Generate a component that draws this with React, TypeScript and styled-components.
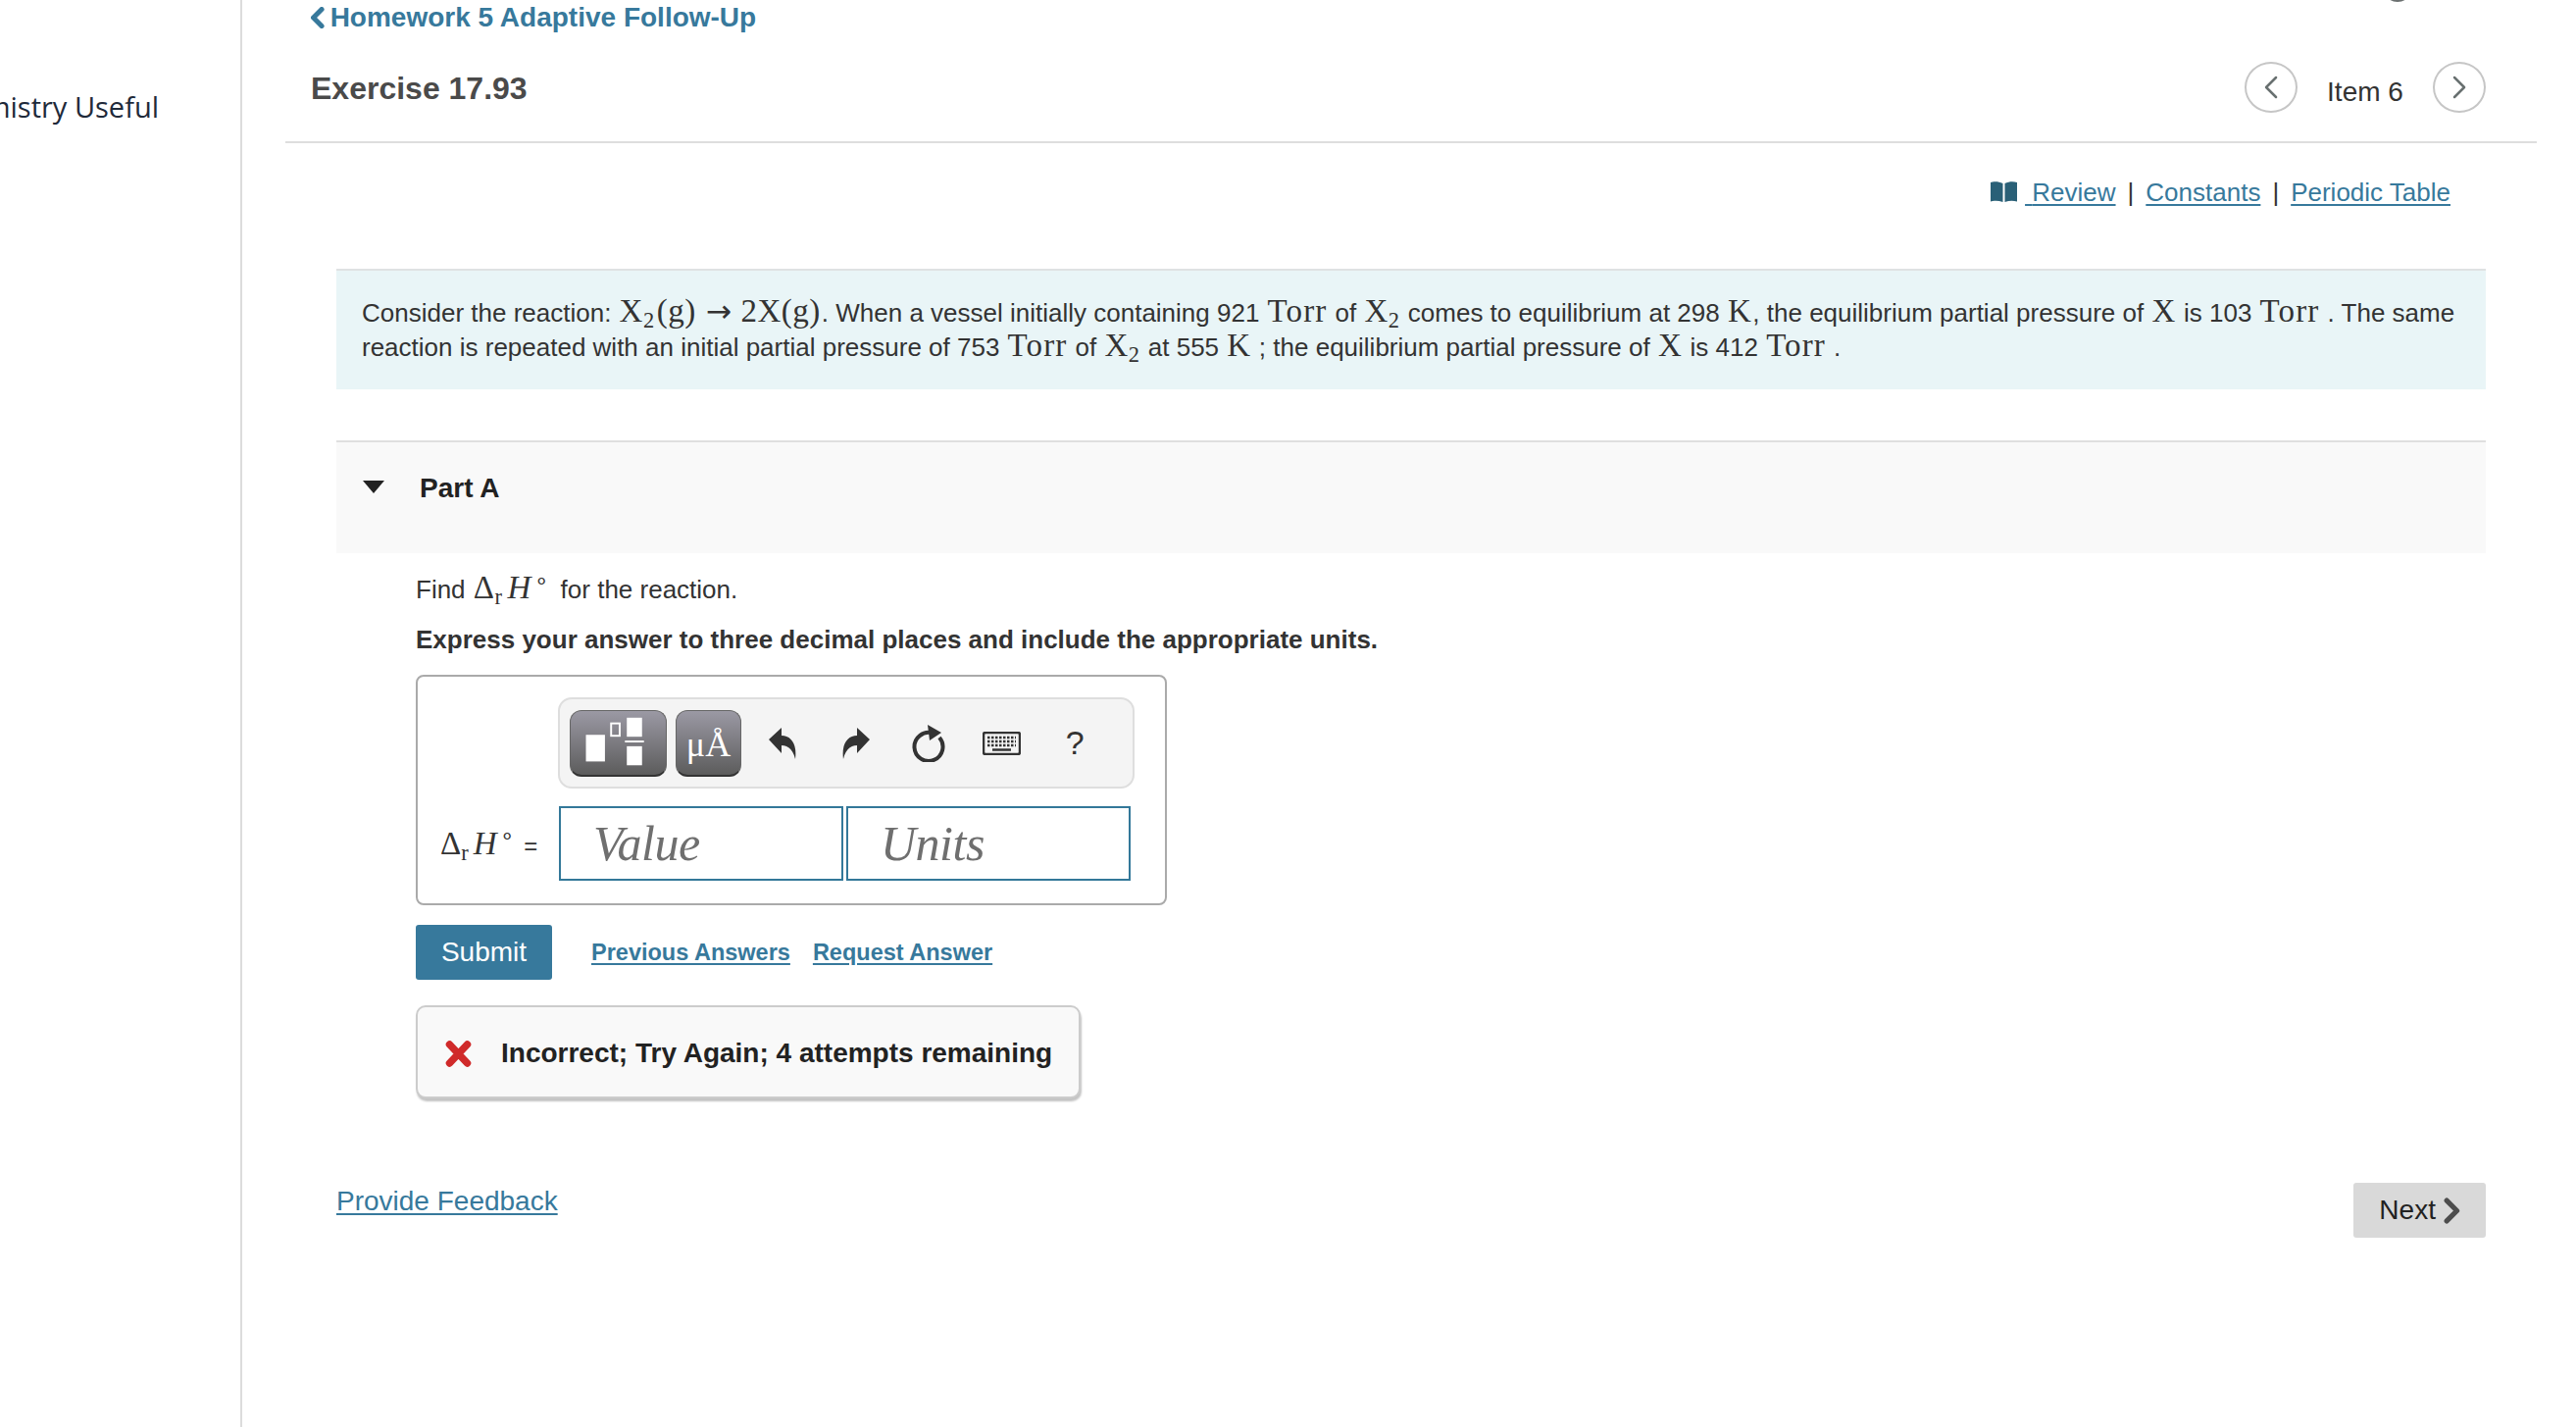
import { FC, ReactNode } from "react"
import styled, { createGlobalStyle } from "styled-components"

const GlobalStyle = createGlobalStyle`
  html, body {
    margin: 0;
    padding: 0;
    background: #fff;
  }
  body {
    font-family: "Liberation Sans", Arial, sans-serif;
    color: #333;
  }
`

const Page = styled.div`
  position: relative;
  display: flex;
  width: 2627px;
  height: 1455px;
  overflow: hidden;
`

const Sidebar = styled.aside`
  flex: none;
  box-sizing: border-box;
  width: 247px;
  height: 100%;
  border-right: 2px solid #dcdcdc;
  overflow: hidden;
  display: flex;
  justify-content: flex-end;
  padding: 89px 83px 0 0;
  font-family: "Open Sans", sans-serif;
  font-size: 29px;
  line-height: 40px;
  color: #1f2a3a;
  white-space: nowrap;
`

const TopCircle = styled.div`
  position: absolute;
  left: 2430px;
  top: -28px;
  width: 30px;
  height: 30px;
  border-radius: 50%;
  background: #6b7070;
`

const Main = styled.main`
  flex: 1;
  padding-left: 44px;
  padding-right: 40px;
`

const Header = styled.header`
  box-sizing: border-box;
  height: 146px;
  border-bottom: 2px solid #dedede;
  padding-left: 26px;
`

const BackLink = styled.a`
  display: flex;
  align-items: center;
  gap: 6px;
  height: 36px;
  font-size: 28px;
  font-weight: 700;
  color: #37799c;
`

const TitleRow = styled.div`
  display: flex;
  align-items: center;
  justify-content: space-between;
  margin-top: 27px;
  padding-right: 52px;
`

const Title = styled.h1`
  margin: 2px 0 0;
  font-size: 32px;
  font-weight: 700;
  color: #4a4a4a;
`

const Pager = styled.div`
  display: flex;
  align-items: center;
  font-size: 28px;
  color: #333;
`

const PagerLabel = styled.span`
  width: 138px;
  padding-top: 10px;
  text-align: center;
`

const RoundButton = styled.button`
  box-sizing: border-box;
  display: flex;
  align-items: center;
  justify-content: center;
  width: 54px;
  height: 52px;
  padding: 0;
  border: 2px solid #c6c6c6;
  border-radius: 50%;
  background: #fff;
`

const Content = styled.div`
  padding: 0 52px;
`

const ResourceRow = styled.div`
  display: flex;
  align-items: center;
  justify-content: flex-end;
  height: 36px;
  margin-top: 32px;
  padding-right: 36px;
  font-size: 26px;
`

const TextLink = styled.a`
  color: #37799c;
  text-decoration: underline;
  text-underline-offset: 3px;
  text-decoration-thickness: 2px;
`

const Pipe = styled.span`
  margin: 0 12px;
  color: #333;
`

const Problem = styled.section`
  box-sizing: border-box;
  height: 123px;
  margin-top: 60px;
  padding: 26px 0 0 26px;
  border-top: 2px solid #dfe2e3;
  background: #e9f5f7;
  font-size: 26px;
  line-height: 35px;
  color: #333;
  white-space: nowrap;
`

const Math = styled.span`
  margin: 0 1px;
  font-family: "Liberation Serif", serif;
  font-size: 1.27em;
  letter-spacing: 0.5px;
  line-height: 0;
`

const Unit = styled(Math)`
  letter-spacing: 1.1px;
`

const Arrow = styled.span`
  margin: 0 9px 0 10px;
  font-family: "DejaVu Sans", sans-serif;
  font-size: 0.95em;
  line-height: 0;
`

const Sub = styled.sub`
  font-size: 0.68em;
  line-height: 0;
  vertical-align: -0.25em;
`

const Italic = styled.i`
  margin-left: 5px;
  font-family: "Liberation Serif", serif;
`

const Sup = styled.sup`
  margin: 0 4px 0 3px;
  font-size: 0.7em;
  line-height: 0;
  vertical-align: 0.45em;
`

const PartHeader = styled.div`
  box-sizing: border-box;
  display: flex;
  align-items: flex-start;
  height: 115px;
  margin-top: 52px;
  padding: 28px 0 0 27px;
  border-top: 2px solid #dfdfdf;
  background: #f9f9f9;
`

const Caret = styled.span`
  width: 0;
  height: 0;
  margin: 11px 36px 0 0;
  border-left: 11px solid transparent;
  border-right: 11px solid transparent;
  border-top: 13px solid #222;
`

const PartTitle = styled.h2`
  margin: 0;
  font-size: 28px;
  line-height: 38px;
  font-weight: 700;
  color: #222;
`

const PartBody = styled.div`
  padding-left: 81px;
`

const Prompt = styled.p`
  margin: 18px 0 0;
  font-size: 26px;
  line-height: 38px;
`

const Instruction = styled.p`
  margin: 14px 0 0;
  font-size: 26px;
  line-height: 36px;
  font-weight: 700;
`

const AnswerBox = styled.div`
  box-sizing: border-box;
  width: 766px;
  height: 235px;
  margin-top: 18px;
  padding: 21px 0 0 24px;
  border: 2px solid #aaa;
  border-radius: 8px;
`

const Toolbar = styled.div`
  box-sizing: border-box;
  display: flex;
  align-items: center;
  width: 588px;
  height: 93px;
  margin-left: 119px;
  padding-left: 10px;
  border: 2px solid #dedede;
  border-radius: 14px;
  background: #f4f4f4;
`

const ToolButton = styled.button<{ $width: number }>`
  box-sizing: border-box;
  display: flex;
  align-items: center;
  justify-content: center;
  width: ${({ $width }) => $width}px;
  height: 68px;
  margin-right: 9px;
  padding: 3px 0 0;
  border: 1px solid #666;
  border-bottom: 2px solid #333;
  border-radius: 12px;
  background: linear-gradient(#9b99a4, #5c5c5c);
  color: #fff;
  font-family: "Liberation Serif", serif;
  font-size: 36px;
`

const IconSlot = styled.div`
  display: flex;
  align-items: center;
  justify-content: center;
  width: 74.5px;
  font-size: 34px;
  color: #333;
  ${ToolButton} + & {
    margin-left: -4px;
  }
`

const AnswerRow = styled.div`
  display: flex;
  align-items: center;
  margin-top: 18px;
`

const AnswerLabel = styled.div`
  width: 121px;
  margin-left: -1px;
  font-size: 24px;
  color: #333;
  white-space: nowrap;
`

const LabelMath = styled.span`
  font-family: "Liberation Serif", serif;
  font-size: 33px;
`

const Field = styled.div`
  box-sizing: border-box;
  width: 290px;
  height: 76px;
  margin-right: 3px;
  padding-left: 33px;
  border: 2px solid #337899;
  background: #fff;
  font-family: "Liberation Serif", serif;
  font-style: italic;
  font-size: 50px;
  letter-spacing: -0.5px;
  line-height: 72px;
  color: #6f6f6f;
`

const ActionRow = styled.div`
  display: flex;
  align-items: center;
  margin-top: 20px;
`

const SubmitButton = styled.button`
  width: 139px;
  height: 56px;
  padding: 0;
  border: 0;
  border-radius: 3px;
  background: #37799c;
  color: #fff;
  font-family: "Liberation Sans", sans-serif;
  font-size: 28px;
`

const ActionLink = styled.a`
  margin-left: 40px;
  font-size: 23.5px;
  font-weight: 700;
  color: #37799c;
  text-decoration: underline;
  text-underline-offset: 3px;
  text-decoration-thickness: 2px;
  & + & {
    margin-left: 23px;
  }
`

const Feedback = styled.div`
  box-sizing: border-box;
  display: flex;
  align-items: center;
  gap: 30px;
  width: 678px;
  height: 95px;
  margin-top: 26px;
  padding: 3px 0 0 28px;
  border: 2px solid #ccc;
  border-radius: 10px;
  background: #f9f9f9;
  box-shadow: 1px 3px 2px #c4c4c4;
  font-size: 28px;
  font-weight: 700;
  color: #222;
`

const Footer = styled.div`
  display: flex;
  align-items: flex-start;
  justify-content: space-between;
  margin-top: 86px;
`

const FooterLink = styled(TextLink)`
  margin-top: 3px;
  font-size: 28px;
`

const NextButton = styled.button`
  display: flex;
  align-items: center;
  justify-content: center;
  gap: 8px;
  width: 135px;
  height: 56px;
  padding: 0;
  border: 0;
  border-radius: 3px;
  background: #d9d9d9;
  color: #222;
  font-family: "Liberation Sans", sans-serif;
  font-size: 28px;
`

const Chevron: FC<{ left?: boolean; size: number; color: string; stroke: number }> = ({ left, size, color, stroke }) => (
  <svg width={size * 0.62} height={size} viewBox="0 0 16 26" fill="none">
    <path
      d={left ? "M13 3 3 13l10 10" : "M3 3l10 10L3 23"}
      stroke={color}
      strokeWidth={stroke}
      strokeLinecap="round"
      strokeLinejoin="round"
    />
  </svg>
)

const BookIcon: FC = () => (
  <svg width="27" height="22" viewBox="0 0 27 22" style={{ marginRight: 8 }}>
    <path d="M0 1c4-1 8-1 12.500 1v19C8 19.500 4 19.500 0 20.500z" fill="#2a6077" />
    <path d="M27 1c-4-1-8-1-12.500 1v19c4.500-1.500 8.500-1.500 12.500-.5z" fill="#2a6077" />
  </svg>
)

const TemplateIcon: FC = () => (
  <svg width="100" height="68" viewBox="0 0 100 68" fill="#fff" style={{ marginTop: -3 }}>
    <rect x="16" y="26" width="20" height="28" />
    <rect x="42.500" y="14" width="9" height="13" fill="none" stroke="#fff" strokeWidth="2" />
    <rect x="59" y="8" width="16" height="20" />
    <rect x="57" y="32" width="20" height="2" />
    <rect x="59" y="38" width="16" height="20" />
  </svg>
)

const UndoIcon: FC<{ flip?: boolean }> = ({ flip }) => (
  <svg width="28" height="32" viewBox="0 0 28 32" style={flip ? { transform: "scaleX(-1)" } : undefined}>
    <path d="M0 12 13 0v8c10 0 16 9 14 24-2-9-7-14-14-14v8z" fill="#333" />
  </svg>
)

const RefreshIcon: FC = () => (
  <svg width="36" height="38" viewBox="0 0 36 38" fill="none">
    <path d="M22 8.500A14.500 14.500 0 1 0 29 13" stroke="#333" strokeWidth="4" />
    <path d="M17 0l14 8-12 8z" fill="#333" />
  </svg>
)

const KeyboardIcon: FC = () => (
  <svg width="39" height="24" viewBox="0 0 39 24">
    <rect x="1" y="1" width="37" height="22" rx="2" fill="#f4f4f4" stroke="#333" strokeWidth="2.500" />
    <path d="M5 6h29M5 10h29M5 14h29" stroke="#333" strokeWidth="2.500" strokeDasharray="2.500 1.500" />
    <path d="M10 18.500h19" stroke="#333" strokeWidth="2.500" />
  </svg>
)

const CrossIcon: FC = () => (
  <svg width="27" height="27" viewBox="0 0 27 27">
    <path d="M4.500 4l18 19M22.500 4l-18 19" stroke="#d02a2a" strokeWidth="7.500" strokeLinecap="round" />
  </svg>
)

const DeltaH: FC = () => (
  <>
    Δ<Sub>r</Sub>
    <Italic>H</Italic>
    <Sup>∘</Sup>
  </>
)

const X2: FC = () => (
  <Math>
    X<Sub>2</Sub>
  </Math>
)

const M: FC<{ children: ReactNode }> = ({ children }) => <Math>{children}</Math>

const App: FC = () => {
  return (
    <Page>
      <GlobalStyle />
      <Sidebar>Chemistry Useful</Sidebar>
      <TopCircle />
      <Main>
        <Header>
          <BackLink>
            <Chevron left size={22} color="#37799c" stroke={6} />
            Homework 5 Adaptive Follow-Up
          </BackLink>
          <TitleRow>
            <Title>Exercise 17.93</Title>
            <Pager>
              <RoundButton>
                <Chevron left size={26} color="#687070" stroke={2.500} />
              </RoundButton>
              <PagerLabel>Item 6</PagerLabel>
              <RoundButton>
                <Chevron size={26} color="#687070" stroke={2.500} />
              </RoundButton>
            </Pager>
          </TitleRow>
        </Header>
        <Content>
          <ResourceRow>
            <BookIcon />
            <TextLink>{"\u00a0"}Review</TextLink>
            <Pipe>|</Pipe>
            <TextLink>Constants</TextLink>
            <Pipe>|</Pipe>
            <TextLink>Periodic Table</TextLink>
          </ResourceRow>
          <Problem>
            Consider the reaction: <X2 />
            <M>
              (g)<Arrow>→</Arrow>2X(g)
            </M>
            . When a vessel initially containing 921 <Unit>Torr</Unit> of <X2 /> comes to equilibrium at 298 <M>K</M>,
            the equilibrium partial pressure of <M>X</M> is 103 <Unit>Torr</Unit> . The same
            <br />
            reaction is repeated with an initial partial pressure of 753 <Unit>Torr</Unit> of <X2 /> at 555 <M>K</M> ; the
            equilibrium partial pressure of <M>X</M> is 412 <Unit>Torr</Unit> .
          </Problem>
          <PartHeader>
            <Caret />
            <PartTitle>Part A</PartTitle>
          </PartHeader>
          <PartBody>
            <Prompt>
              Find{" "}
              <Math>
                <DeltaH />
              </Math>{" "}
              for the reaction.
            </Prompt>
            <Instruction>Express your answer to three decimal places and include the appropriate units.</Instruction>
            <AnswerBox>
              <Toolbar>
                <ToolButton $width={99}>
                  <TemplateIcon />
                </ToolButton>
                <ToolButton $width={67}>μÅ</ToolButton>
                <IconSlot>
                  <UndoIcon />
                </IconSlot>
                <IconSlot>
                  <UndoIcon flip />
                </IconSlot>
                <IconSlot>
                  <RefreshIcon />
                </IconSlot>
                <IconSlot>
                  <KeyboardIcon />
                </IconSlot>
                <IconSlot>?</IconSlot>
              </Toolbar>
              <AnswerRow>
                <AnswerLabel>
                  <LabelMath>
                    <DeltaH />
                  </LabelMath>{" "}
                  =
                </AnswerLabel>
                <Field>Value</Field>
                <Field>Units</Field>
              </AnswerRow>
            </AnswerBox>
            <ActionRow>
              <SubmitButton>Submit</SubmitButton>
              <ActionLink>Previous Answers</ActionLink>
              <ActionLink>Request Answer</ActionLink>
            </ActionRow>
            <Feedback>
              <CrossIcon />
              Incorrect; Try Again; 4 attempts remaining
            </Feedback>
          </PartBody>
          <Footer>
            <FooterLink>Provide Feedback</FooterLink>
            <NextButton>
              Next
              <Chevron size={27} color="#4d4d4d" stroke={5} />
            </NextButton>
          </Footer>
        </Content>
      </Main>
    </Page>
  )
}

export default App
